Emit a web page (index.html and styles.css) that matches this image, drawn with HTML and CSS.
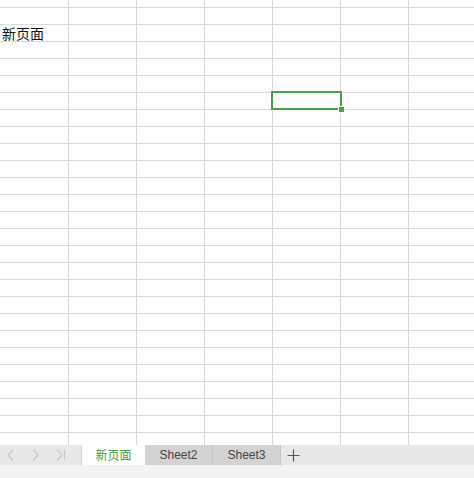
FILE: index.html
```html
<!DOCTYPE html>
<html>
<head>
<meta charset="utf-8">
<link rel="stylesheet" href="styles.css">
</head>
<body>
<div class="sheet">
  <div class="grid" id="grid"></div>
  <div class="selection"><span class="handle"></span></div>
</div>
<div class="tabbar">
  <div class="nav">
    <svg class="arrow" width="10" height="14" viewBox="0 0 10 14"><path d="M7 1.5L2 7l5 5.5" stroke="#c8c8c8" stroke-width="1.2" fill="none"/></svg>
    <svg class="arrow" width="10" height="14" viewBox="0 0 10 14"><path d="M3 1.5L8 7l-5 5.5" stroke="#c8c8c8" stroke-width="1.2" fill="none"/></svg>
    <svg class="arrow" width="12" height="14" viewBox="0 0 12 14"><path d="M3 1.5L8 7l-5 5.5M10.5 1.5v11" stroke="#c8c8c8" stroke-width="1.2" fill="none"/></svg>
  </div>
  <div class="tab active">新页面</div>
  <div class="tab">Sheet2</div>
  <div class="tab">Sheet3</div>
  <div class="add">
    <svg width="13" height="13" viewBox="0 0 13 13"><path d="M6.5 0.5v12M0.5 6.5h12" stroke="#555" stroke-width="1.2" fill="none"/></svg>
  </div>
</div>
<div class="bottom"></div>
<script>
  var g = document.getElementById('grid');
  var html = '';
  for (var r = 0; r < 27; r++) {
    for (var c = 0; c < 7; c++) {
      var txt = (r === 2 && c === 0) ? '新页面' : '';
      html += '<div class="cell">' + txt + '</div>';
    }
  }
  g.innerHTML = html;
</script>
</body>
</html>
```

FILE: styles.css
```css
html, body {
  margin: 0;
  padding: 0;
  background: #ffffff;
  width: 474px;
  height: 478px;
  overflow: hidden;
  font-family: "Noto Sans CJK SC", "Noto Sans", sans-serif;
}

.sheet {
  position: relative;
  height: 445px;
  overflow: hidden;
}

.grid {
  display: grid;
  grid-template-columns: 69px repeat(6, 68px);
  grid-template-rows: 8px;
  grid-auto-rows: 17px;
}

.cell {
  box-sizing: border-box;
  border-right: 1px solid #dadada;
  border-bottom: 1px solid #dadada;
  font-size: 14px;
  line-height: 16px;
  color: #111;
  padding-left: 2px;
  white-space: nowrap;
  overflow: visible;
}

.selection {
  position: absolute;
  left: 271px;
  top: 91px;
  width: 67px;
  height: 15px;
  border: 2px solid #45a245;
}

.handle {
  position: absolute;
  right: -5px;
  bottom: -5px;
  width: 5px;
  height: 5px;
  background: #45a245;
  border: 1px solid #ffffff;
}

.tabbar {
  display: flex;
  height: 20px;
  background: #e8e8e8;
  align-items: stretch;
}

.nav {
  width: 82px;
  display: flex;
  align-items: center;
  padding-left: 6px;
  box-sizing: border-box;
  gap: 14px;
  border-right: 1px solid #d6d6d6;
}

.arrow {
  display: block;
}

.tab {
  font-size: 12px;
  line-height: 20px;
  color: #444;
  background: #d3d3d3;
  width: 67px;
  text-align: center;
  border-right: 1px solid #c6c6c6;
  font-family: "Liberation Sans", "Noto Sans CJK SC", sans-serif;
}

.tab.active {
  background: #ffffff;
  color: #3f9e3f;
  width: 63px;
  border-right: none;
  font-family: "Noto Sans CJK SC", sans-serif;
}

.add {
  width: 24px;
  display: flex;
  align-items: center;
  justify-content: center;
}

.bottom {
  height: 13px;
  background: #f3f3f3;
}
```
